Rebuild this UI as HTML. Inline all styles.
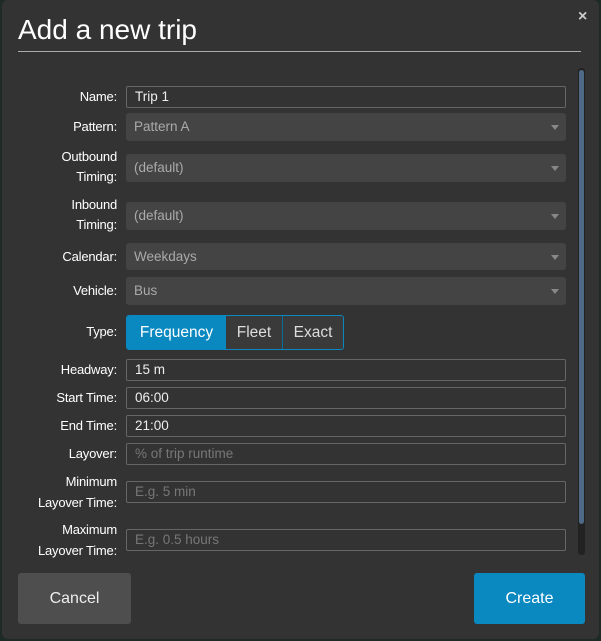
<!DOCTYPE html><html><head><style>
body{margin:0;width:601px;height:641px;background:#1d2a26;font-family:"Liberation Sans",sans-serif;position:relative;overflow:hidden}
.d{position:absolute;left:2px;top:0;width:597px;height:639px;background:#333;border-radius:6px}
.a{position:absolute}
.l{position:absolute;right:484px;color:#fff;font-size:13px;text-align:right;line-height:20px;letter-spacing:-0.2px}
.i{position:absolute;left:126px;height:20px;border:1px solid #666;border-radius:2px;color:#eee;font-size:13.5px;line-height:20px;padding-left:8px;box-sizing:content-box;width:430px}
.s{position:absolute;left:126px;width:432px;background:#444;border-radius:3px;color:#aaa;font-size:13.5px;padding-left:8px}
.s:after{content:"";position:absolute;right:7px;top:50%;margin-top:-2px;border:4px solid transparent;border-top:5px solid #888;border-bottom:0}
.p{color:#777}
</style></head><body><div class="d"></div>
<div class="a" style="left:18px;top:14px;font-size:28px;color:#fff">Add a new trip</div>
<div class="a" style="left:578px;top:8px;font-size:16px;color:#ccc;font-weight:bold">×</div>
<div class="a" style="left:18px;top:51px;width:563px;height:1px;background:#aaa"></div>
<div class="a" style="left:578px;top:68px;width:7px;height:487px;background:#222;border-radius:3px"></div>
<div class="a" style="left:579px;top:70px;width:5px;height:454px;background:#4e6a86;border-radius:3px"></div>
<div class="l" style="top:87px">Name:</div><div class="i" style="top:86px">Trip 1</div>
<div class="l" style="top:117px">Pattern:</div><div class="s" style="top:113px;height:28px;line-height:28px">Pattern A</div>
<div class="l" style="top:147px">Outbound<br>Timing:</div><div class="s" style="top:154px;height:28px;line-height:28px">(default)</div>
<div class="l" style="top:195px">Inbound<br>Timing:</div><div class="s" style="top:202px;height:28px;line-height:28px">(default)</div>
<div class="l" style="top:247px">Calendar:</div><div class="s" style="top:243px;height:27px;line-height:27px">Weekdays</div>
<div class="l" style="top:281px">Vehicle:</div><div class="s" style="top:277px;height:28px;line-height:28px">Bus</div>
<div class="l" style="top:322px">Type:</div>
<div class="a" style="left:126px;top:315px;width:216px;height:33px;border:1px solid #0a86c0;border-radius:3px;overflow:hidden;font-size:15.5px;line-height:33px;color:#ddd;display:flex">
<div style="width:99px;background:#0a88c0;color:#fff;text-align:center">Frequency</div>
<div style="width:56px;background:#3a3a3a;text-align:center;border-right:1px solid #0a6a98">Fleet</div>
<div style="flex:1;background:#3a3a3a;text-align:center">Exact</div></div>
<div class="l" style="top:360px">Headway:</div><div class="i" style="top:359px">15 m</div>
<div class="l" style="top:388px">Start Time:</div><div class="i" style="top:387px">06:00</div>
<div class="l" style="top:416px">End Time:</div><div class="i" style="top:415px">21:00</div>
<div class="l" style="top:444px">Layover:</div><div class="i p" style="top:443px">% of trip runtime</div>
<div class="l" style="top:471px;line-height:21px">Minimum<br>Layover Time:</div><div class="i p" style="top:481px">E.g. 5 min</div>
<div class="l" style="top:519px;line-height:21px">Maximum<br>Layover Time:</div><div class="i p" style="top:529px">E.g. 0.5 hours</div>
<div class="a" style="left:18px;top:573px;width:113px;height:51px;background:#4e4e4e;border-radius:3px;color:#eee;font-size:16px;line-height:51px;text-align:center">Cancel</div>
<div class="a" style="left:474px;top:573px;width:111px;height:51px;background:#0a88c0;border-radius:3px;color:#fff;font-size:16px;line-height:51px;text-align:center">Create</div>
</body></html>
